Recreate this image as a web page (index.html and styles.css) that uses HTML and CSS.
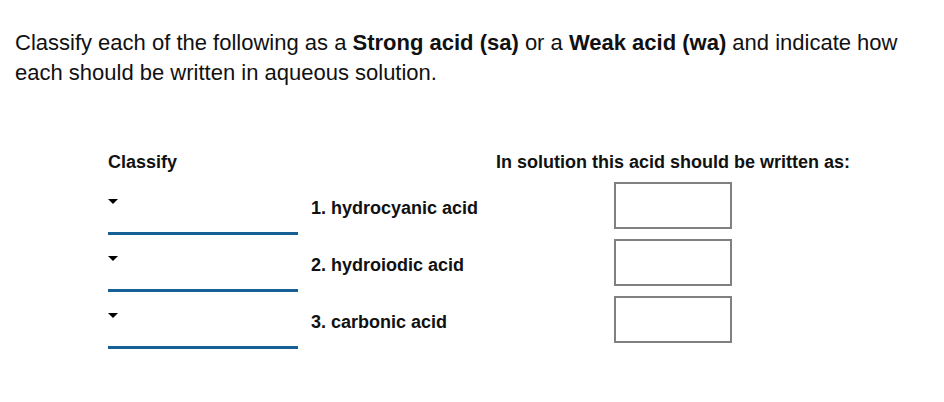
FILE: index.html
```html
<!doctype html>
<html lang="en">
    <head>
        <meta charset="UTF-8" />
        <meta name="viewport" content="width=device-width, initial-scale=1.0" />
        <title>Classify Acids</title>
        <link rel="stylesheet" href="styles.css">
    </head>
    <body>
        <p class="prompt">
            Classify each of the following as a <strong>Strong acid (sa)</strong> or a
            <strong>Weak acid (wa)</strong> and indicate how each should be written in
            aqueous solution.
        </p>

        <div class="classify-table">
            <div class="col-head">Classify</div>
            <div></div>
            <div class="col-head answer-head">In solution this acid should be written as:</div>

            <div class="dropdown"><span class="caret"></span></div>
            <div class="acid-name">1. hydrocyanic acid</div>
            <div class="answer-cell"><div class="answer-box"></div></div>

            <div class="dropdown"><span class="caret"></span></div>
            <div class="acid-name">2. hydroiodic acid</div>
            <div class="answer-cell"><div class="answer-box"></div></div>

            <div class="dropdown"><span class="caret"></span></div>
            <div class="acid-name">3. carbonic acid</div>
            <div class="answer-cell"><div class="answer-box"></div></div>
        </div>
    </body>
</html>
```

FILE: styles.css
```css
* {
    margin: 0;
    padding: 0;
    box-sizing: border-box;
}

body {
    font-family: "Liberation Sans", Arial, sans-serif;
    color: #111;
    background: #fff;
    padding: 28px 15px 0;
}

.prompt {
    font-size: 22px;
    line-height: 30px;
    max-width: 900px;
}

.prompt strong {
    font-weight: bold;
}

.classify-table {
    display: grid;
    grid-template-columns: 190px 195px 360px;
    row-gap: 4px;
    align-items: start;
    margin: 63px 0 0 93px;
}

.col-head {
    font-size: 18px;
    font-weight: bold;
    line-height: 22px;
    margin-bottom: 5px;
}

.answer-head {
    text-align: center;
}

.dropdown {
    height: 53px;
    padding-top: 17px;
    border-bottom: 3px solid #176096;
}

.caret {
    display: block;
    width: 0;
    height: 0;
    border-top: 5px solid #000;
    border-left: 5px solid transparent;
    border-right: 5px solid transparent;
}

.acid-name {
    font-size: 18px;
    font-weight: bold;
    line-height: 22px;
    padding: 15px 0 0 13px;
    white-space: nowrap;
}

.answer-cell {
    display: flex;
    justify-content: center;
}

.answer-box {
    width: 118px;
    height: 47px;
    border: 2px solid #808080;
}
```
